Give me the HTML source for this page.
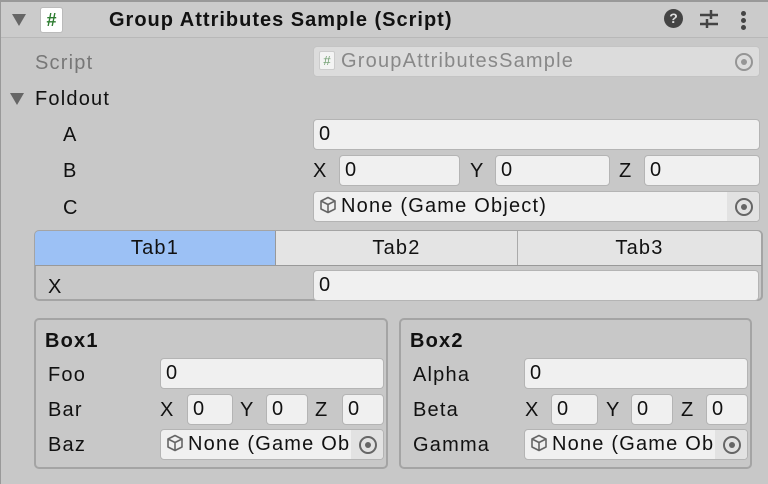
<!DOCTYPE html>
<html><head><meta charset="utf-8"><style>
*{margin:0;padding:0;box-sizing:border-box}
body{width:768px;height:484px;background:#c8c8c8;font-family:"Liberation Sans",sans-serif;font-size:20px;letter-spacing:1.2px;color:#111;position:relative;overflow:hidden}
.a{position:absolute;line-height:22px;white-space:nowrap}
.f{position:absolute;background:#f0f0f0;border:1px solid #b4b4b4;border-radius:4px;height:31px;line-height:29px;padding-left:5px;white-space:nowrap;overflow:hidden}
.box{position:absolute;border:2px solid #a4a4a4;border-radius:5px}
.tri{position:absolute;width:0;height:0;border-left:7px solid transparent;border-right:7px solid transparent;border-top:12px solid #666}
.tgt{position:absolute;right:0;top:0;width:32px;height:29px;background:#e2e2e2}
.tgt:after{content:"";position:absolute;left:8px;top:6px;width:14px;height:14px;border:2px solid #666;border-radius:50%}
.tgt:before{content:"";position:absolute;left:14px;top:12px;width:6px;height:6px;background:#666;border-radius:50%;z-index:1}
.cube{display:inline-block;vertical-align:-2px;margin-right:4px}
</style></head><body>
<div style="position:absolute;left:0;top:0;width:1px;height:484px;background:#999"></div>
<div style="position:absolute;left:0;top:0;width:768px;height:2px;background:#999"></div>
<div style="position:absolute;left:1px;top:2px;width:767px;height:36px;background:#cbcbcb;border-bottom:1px solid #b8b8b8"></div>
<div class="tri" style="left:12px;top:14px"></div>
<div style="position:absolute;left:40px;top:7px;width:23px;height:26px;background:#fff;border:1px solid #bbb;border-radius:3px;color:#2f7d32;font-weight:bold;font-size:18px;letter-spacing:0;text-align:center;line-height:24px">#</div>
<div class="a" style="left:109px;top:9px;font-weight:bold;letter-spacing:1px">Group Attributes Sample (Script)</div>
<div style="position:absolute;left:664px;top:9px;width:19px;height:19px;border-radius:50%;background:#444;color:#ddd;font-weight:bold;font-size:14px;letter-spacing:0;text-align:center;line-height:19px">?</div>
<svg style="position:absolute;left:698px;top:9px" width="22" height="20"><g stroke="#444" stroke-width="2.5"><line x1="2" y1="6" x2="20" y2="6"/><line x1="2" y1="15" x2="20" y2="15"/><line x1="13" y1="1" x2="13" y2="10"/><line x1="9" y1="10" x2="9" y2="19"/></g></svg>
<div style="position:absolute;left:741px;top:11px;width:5px;height:5px;border-radius:50%;background:#444;box-shadow:0 7px 0 #444,0 14px 0 #444"></div>

<div class="a" style="left:35px;top:52px;color:#777">Script</div>
<div class="f" style="left:313px;top:46px;width:447px;background:#dcdcdc;border-color:#c4c4c4;color:#888"><span style="display:inline-block;width:16px;height:19px;background:#f4f4f4;border:1px solid #ccc;border-radius:2px;color:#6a9a6a;font-size:13px;letter-spacing:0;text-align:center;line-height:17px;vertical-align:2px;margin-right:6px">#</span>GroupAttributesSample<div class="tgt" style="background:transparent;opacity:.6"></div></div>

<div class="tri" style="left:10px;top:93px"></div>
<div class="a" style="left:35px;top:88px">Foldout</div>

<div class="a" style="left:63px;top:124px">A</div>
<div class="f" style="left:313px;top:119px;width:447px">0</div>
<div class="a" style="left:63px;top:160px">B</div>
<div class="a" style="left:313px;top:160px">X</div><div class="f" style="left:339px;top:155px;width:121px">0</div>
<div class="a" style="left:470px;top:160px">Y</div><div class="f" style="left:495px;top:155px;width:115px">0</div>
<div class="a" style="left:619px;top:160px">Z</div><div class="f" style="left:644px;top:155px;width:116px">0</div>
<div class="a" style="left:63px;top:197px">C</div>
<div class="f" style="left:313px;top:191px;width:447px"><svg class="cube" width="18" height="18" viewBox="0 0 18 18"><path d="M9 1.5 16 5v8l-7 3.5L2 13V5zM2 5l7 3.5L16 5M9 8.5v8" fill="none" stroke="#666" stroke-width="1.6" stroke-linejoin="round"/></svg>None (Game Object)<div class="tgt"></div></div>

<div class="box" style="left:34px;top:230px;width:729px;height:71px"></div>
<div style="position:absolute;left:35px;top:231px;width:241px;height:34px;background:#9cc1f5;border-radius:4px 0 0 0;border-right:1px solid #999;text-align:center;line-height:34px">Tab1</div>
<div style="position:absolute;left:276px;top:231px;width:242px;height:34px;background:#e4e4e4;border-right:1px solid #aaa;text-align:center;line-height:34px">Tab2</div>
<div style="position:absolute;left:518px;top:231px;width:243px;height:34px;background:#e4e4e4;border-radius:0 4px 0 0;text-align:center;line-height:34px">Tab3</div>
<div style="position:absolute;left:35px;top:265px;width:727px;height:1px;background:#999"></div>
<div class="a" style="left:48px;top:276px">X</div>
<div class="f" style="left:313px;top:270px;width:446px">0</div>

<div class="box" style="left:34px;top:318px;width:354px;height:151px"></div>
<div class="a" style="left:45px;top:330px;font-weight:bold">Box1</div>
<div class="a" style="left:48px;top:364px">Foo</div>
<div class="f" style="left:160px;top:358px;width:224px">0</div>
<div class="a" style="left:48px;top:399px">Bar</div>
<div class="a" style="left:160px;top:399px">X</div><div class="f" style="left:187px;top:394px;width:46px">0</div>
<div class="a" style="left:240px;top:399px">Y</div><div class="f" style="left:266px;top:394px;width:42px">0</div>
<div class="a" style="left:315px;top:399px">Z</div><div class="f" style="left:342px;top:394px;width:42px">0</div>
<div class="a" style="left:48px;top:434px">Baz</div>
<div class="f" style="left:160px;top:429px;width:224px"><svg class="cube" width="18" height="18" viewBox="0 0 18 18"><path d="M9 1.5 16 5v8l-7 3.5L2 13V5zM2 5l7 3.5L16 5M9 8.5v8" fill="none" stroke="#666" stroke-width="1.6" stroke-linejoin="round"/></svg>None (Game Ob<div class="tgt"></div></div>

<div class="box" style="left:399px;top:318px;width:353px;height:151px"></div>
<div class="a" style="left:410px;top:330px;font-weight:bold">Box2</div>
<div class="a" style="left:413px;top:364px">Alpha</div>
<div class="f" style="left:524px;top:358px;width:224px">0</div>
<div class="a" style="left:413px;top:399px">Beta</div>
<div class="a" style="left:525px;top:399px">X</div><div class="f" style="left:551px;top:394px;width:47px">0</div>
<div class="a" style="left:606px;top:399px">Y</div><div class="f" style="left:631px;top:394px;width:42px">0</div>
<div class="a" style="left:681px;top:399px">Z</div><div class="f" style="left:706px;top:394px;width:42px">0</div>
<div class="a" style="left:413px;top:434px">Gamma</div>
<div class="f" style="left:524px;top:429px;width:224px"><svg class="cube" width="18" height="18" viewBox="0 0 18 18"><path d="M9 1.5 16 5v8l-7 3.5L2 13V5zM2 5l7 3.5L16 5M9 8.5v8" fill="none" stroke="#666" stroke-width="1.6" stroke-linejoin="round"/></svg>None (Game Ob<div class="tgt"></div></div>
</body></html>
